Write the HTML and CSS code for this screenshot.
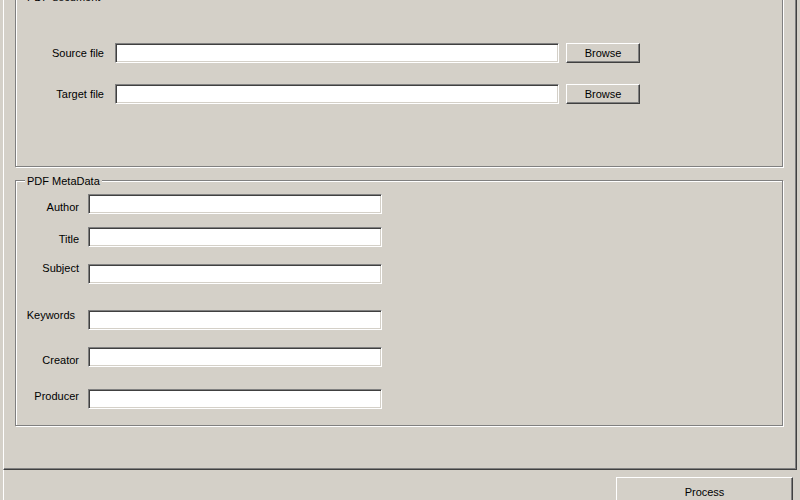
FILE: index.html
```html
<!DOCTYPE html>
<html>
<head>
<meta charset="utf-8">
<title>PDF</title>
<link rel="stylesheet" href="styles.css">
</head>
<body>
<div class="app">
  <div class="panel">
    <div class="group group-doc">
      <span class="legend">PDF document</span>
      <div class="file-row">
        <span class="file-label">Source file</span>
        <input class="field field-file" type="text">
        <button class="btn btn-browse">Browse</button>
      </div>
      <div class="file-row file-row-next">
        <span class="file-label">Target file</span>
        <input class="field field-file" type="text">
        <button class="btn btn-browse">Browse</button>
      </div>
    </div>
    <div class="group group-meta">
      <span class="legend">PDF MetaData</span>
      <div class="meta-row">
        <span class="meta-label lbl-author">Author</span>
        <input class="field field-meta" type="text">
      </div>
      <div class="meta-row row-title">
        <span class="meta-label lbl-title">Title</span>
        <input class="field field-meta" type="text">
      </div>
      <div class="meta-row row-subject">
        <span class="meta-label lbl-subject">Subject</span>
        <input class="field field-meta" type="text">
      </div>
      <div class="meta-row row-keywords">
        <span class="meta-label lbl-keywords">Keywords</span>
        <input class="field field-meta" type="text">
      </div>
      <div class="meta-row row-creator">
        <span class="meta-label lbl-creator">Creator</span>
        <input class="field field-meta" type="text">
      </div>
      <div class="meta-row row-producer">
        <span class="meta-label lbl-producer">Producer</span>
        <input class="field field-meta" type="text">
      </div>
    </div>
  </div>
  <div class="footer">
    <button class="btn btn-process">Process</button>
  </div>
</div>
</body>
</html>
```

FILE: styles.css
```css
html, body {
  margin: 0;
  padding: 0;
  background: #d4d0c8;
  overflow: hidden;
}

body {
  font-family: "Liberation Sans", Arial, sans-serif;
  font-size: 11px;
  color: #000;
}

.app {
  width: 800px;
  height: 500px;
  display: flex;
  flex-direction: column;
  overflow: hidden;
}

.panel {
  flex: none;
  box-sizing: border-box;
  height: 480px;
  margin: -10px 3px 0 3px;
  padding: 7px 0 0 11px;
  border-left: 1px solid #ffffff;
  border-right: 1px solid #404040;
  border-bottom: 1px solid #404040;
  box-shadow: inset -1px -1px 0 #808080;
}

.group {
  position: relative;
  box-sizing: border-box;
  width: 768px;
  border: 1px solid #808080;
  box-shadow: inset 1px 1px 0 #ffffff, 1px 1px 0 #ffffff;
}

.legend {
  position: absolute;
  left: 9px;
  top: -6px;
  padding: 0 2px;
  line-height: 13px;
  background: #d4d0c8;
  white-space: nowrap;
}

.group-doc {
  height: 170px;
  padding-top: 45px;
}

.group-doc .legend {
  top: -7px;
}

.group-meta {
  height: 246px;
  margin-top: 13px;
  padding-top: 13px;
}

.field {
  box-sizing: border-box;
  height: 20px;
  margin: 0;
  padding: 0 3px;
  background: #ffffff;
  border: 1px solid;
  border-color: #808080 #ffffff #ffffff #808080;
  box-shadow: inset 1px 1px 0 #404040, inset -1px -1px 0 #d4d0c8;
  font: inherit;
  outline: none;
}

.btn {
  box-sizing: border-box;
  margin: 0;
  padding: 0;
  background: #d4d0c8;
  border: 1px solid;
  border-color: #ffffff #404040 #404040 #ffffff;
  box-shadow: inset -1px -1px 0 #808080;
  font: inherit;
  color: #000;
  text-align: center;
}

.file-row {
  display: flex;
  align-items: center;
  height: 20px;
}

.file-row-next {
  margin-top: 21px;
}

.file-label {
  width: 88px;
  margin-right: 11px;
  text-align: right;
  line-height: 13px;
  white-space: nowrap;
}

.field-file {
  width: 444px;
  margin-right: 7px;
}

.btn-browse {
  width: 74px;
  height: 20px;
}

.meta-row {
  display: flex;
  align-items: flex-start;
  height: 20px;
}

.meta-label {
  box-sizing: border-box;
  width: 63px;
  margin-right: 9px;
  text-align: right;
  line-height: 13px;
  white-space: nowrap;
}

.field-meta {
  width: 294px;
}

.row-title { margin-top: 13px; }
.row-subject { margin-top: 17px; }
.row-keywords { margin-top: 26px; }
.row-creator { margin-top: 17px; }
.row-producer { margin-top: 22px; }

.lbl-author { margin-top: 7px; }
.lbl-title { margin-top: 6px; }
.lbl-subject { margin-top: -2px; }
.lbl-keywords { margin-top: -1px; padding-right: 4px; }
.lbl-creator { margin-top: 7px; }
.lbl-producer { margin-top: 1px; }

.footer {
  flex: none;
  height: 30px;
  margin-left: 3px;
  border-left: 1px solid #ffffff;
  display: flex;
  justify-content: flex-end;
  align-items: flex-start;
  padding: 7px 7px 0 0;
}

.btn-process {
  width: 177px;
  height: 30px;
  padding-bottom: 1px;
  line-height: 28px;
}
```
